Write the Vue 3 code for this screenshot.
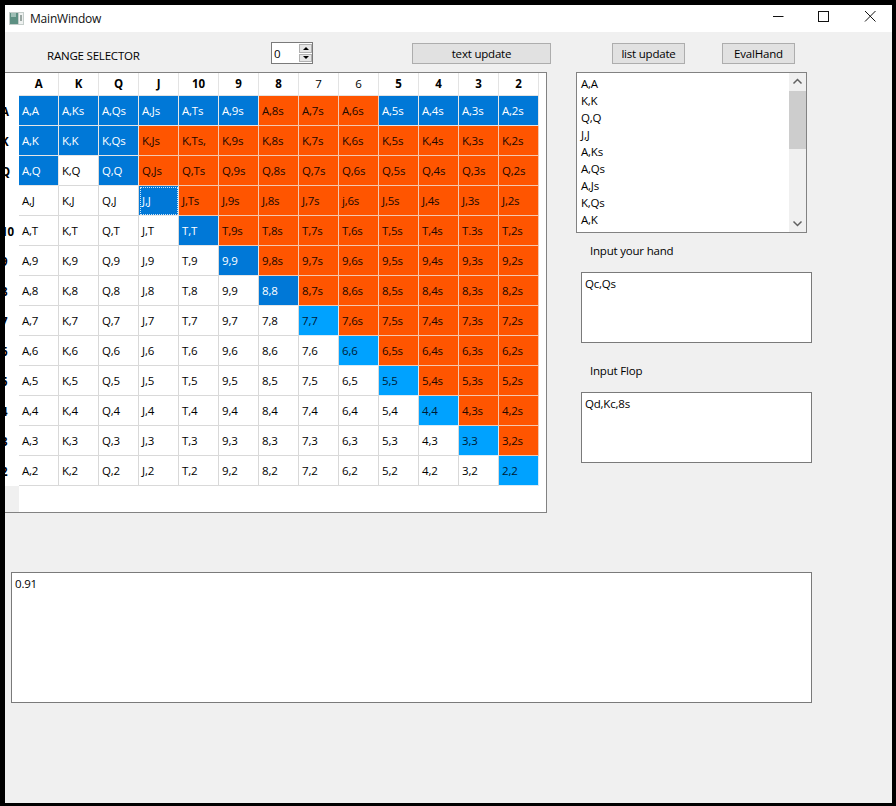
<script setup>
import { ref } from 'vue'

const ranks = ['A', 'K', 'Q', 'J', 'T', '9', '8', '7', '6', '5', '4', '3', '2']
const headers = ['A', 'K', 'Q', 'J', '10', '9', '8', '7', '6', '5', '4', '3', '2']
const thinHeaders = ['7', '6']

// typos that are in the real table
const overrides = { 'K,Ts': 'K,Ts,', 'J,6s': 'j,6s', 'T,3s': 'T.3s', '9,8': '9,9', '8,7': '7,8' }

const isBlue = (r, c) => {
  if (r === 0) return c <= 5 || c >= 9
  if (r === 1) return c <= 2
  if (r === 2) return c === 0 || c === 2
  return r === c && r <= 6
}

const cellClass = (r, c) => {
  if (isBlue(r, c)) return r === 3 && c === 3 ? 'cell--blue cell--focus' : 'cell--blue'
  if (r === c) return 'cell--light'
  if (c > r) return 'cell--orange'
  return ''
}

const cellText = (r, c) => {
  let text
  if (r === c) text = `${ranks[r]},${ranks[c]}`
  else if (c > r) text = `${ranks[r]},${ranks[c]}s`
  else text = `${ranks[c]},${ranks[r]}`
  return overrides[text] || text
}

const listItems = ['A,A', 'K,K', 'Q,Q', 'J,J', 'A,Ks', 'A,Qs', 'A,Js', 'K,Qs', 'A,K']

const spin = ref('0')
const hand = ref('Qc,Qs')
const flop = ref('Qd,Kc,8s')
const output = ref('0.91')
</script>

<template>
  <div class="window">
    <div class="titlebar">
      <svg class="app-icon" width="15" height="13" viewBox="0 0 15 13">
        <rect width="15" height="13" fill="#c4cdca" />
        <rect x="1" y="1" width="8" height="11" fill="#5d8f82" />
        <rect x="2" y="1" width="5" height="4" fill="#9fbfb6" />
        <rect x="10" y="1" width="4" height="11" fill="#eef1f0" />
        <rect x="11" y="3" width="2" height="6" fill="#9aa6a2" />
      </svg>
      <span class="title">MainWindow</span>
      <div class="controls">
        <svg width="46" height="27" viewBox="0 0 46 27"><path d="M18 11.5h10.500" stroke="#111" fill="none" /></svg>
        <svg width="46" height="27" viewBox="0 0 46 27"><rect x="17.500" y="6.500" width="10" height="10" stroke="#111" fill="none" /></svg>
        <svg width="46" height="27" viewBox="0 0 46 27"><path d="M18 6l10.500 10.500M28.500 6L18 16.500" stroke="#111" fill="none" /></svg>
      </div>
    </div>

    <div class="client">
      <div class="toolbar">
        <span class="range-label">RANGE SELECTOR</span>
        <div class="spinbox">
          <input v-model="spin" class="spinbox__input" />
          <div class="spinbox__buttons">
            <span class="spinbox__btn"><i class="arrow arrow--up"></i></span>
            <span class="spinbox__btn"><i class="arrow arrow--down"></i></span>
          </div>
        </div>
        <button class="btn btn--text">text update</button>
        <button class="btn btn--list">list update</button>
        <button class="btn btn--eval">EvalHand</button>
      </div>

      <div class="main">
        <div class="table">
          <div class="corner"></div>
          <div
            v-for="h in headers"
            :key="h"
            class="col-header"
            :class="{ 'col-header--thin': thinHeaders.includes(h) }"
          >{{ h }}</div>
          <template v-for="(h, r) in headers" :key="h">
            <div class="row-header">{{ h }}</div>
            <div
              v-for="(_, c) in ranks"
              :key="c"
              class="cell"
              :class="cellClass(r, c)"
            >{{ cellText(r, c) }}</div>
          </template>
          <div class="table__gutter"></div>
        </div>

        <div class="side">
          <div class="list">
            <div class="list__items">
              <div v-for="item in listItems" :key="item" class="list__item">{{ item }}</div>
            </div>
            <div class="scrollbar">
              <svg width="17" height="17" viewBox="0 0 17 17"><path d="M4.500 10.500l4-4 4 4" stroke="#606060" stroke-width="1.500" fill="none" /></svg>
              <div class="scrollbar__track"><div class="scrollbar__thumb"></div></div>
              <svg width="17" height="17" viewBox="0 0 17 17"><path d="M4.500 6.500l4 4 4-4" stroke="#606060" stroke-width="1.500" fill="none" /></svg>
            </div>
          </div>
          <div class="side__label">Input your hand</div>
          <textarea v-model="hand" class="edit edit--side"></textarea>
          <div class="side__label">Input Flop</div>
          <textarea v-model="flop" class="edit edit--side"></textarea>
        </div>
      </div>

      <textarea v-model="output" class="edit edit--output"></textarea>
    </div>
  </div>
</template>

<style>
html,
body {
  margin: 0;
  background: #000;
}
</style>

<style scoped>
.window {
  width: 887px;
  height: 798px;
  margin: 5px 0 0 5px;
  background: #f0f0f0;
  overflow: hidden;
  font-family: "Open Sans", "Liberation Sans", sans-serif;
  font-size: 11.500px;
  color: #000;
  letter-spacing: -0.200px;
}

.titlebar {
  height: 27px;
  background: #fff;
  display: flex;
  align-items: center;
  padding-left: 4px;
}

.app-icon {
  margin-right: 6px;
}

.title {
  font-size: 12px;
  color: #111;
}

.controls {
  margin-left: auto;
  display: flex;
  margin-right: -1px;
  height: 27px;
}

.controls svg {
  margin-left: 0;
}

.toolbar {
  display: flex;
  align-items: center;
  height: 22px;
  margin-top: 10px;
  padding-left: 42px;
}

.range-label {
  width: 224px;
  padding-top: 5px;
  white-space: nowrap;
}

.spinbox {
  width: 42px;
  height: 22px;
  box-sizing: border-box;
  border: 1px solid #7a7a7a;
  background: #fff;
  display: flex;
}

.spinbox__input {
  width: 25px;
  border: none;
  outline: none;
  padding: 0 0 0 2px;
  font: inherit;
  background: transparent;
}

.spinbox__buttons {
  width: 15px;
  display: flex;
  flex-direction: column;
  gap: 1px;
  padding: 1px 0;
}

.spinbox__btn {
  flex: 1;
  background: #e6e6e6;
  border: 1px solid #b0b0b0;
  display: flex;
  align-items: center;
  justify-content: center;
}

.arrow {
  width: 0;
  height: 0;
  border-left: 3px solid transparent;
  border-right: 3px solid transparent;
}

.arrow--up {
  border-bottom: 3px solid #000;
}

.arrow--down {
  border-top: 3px solid #000;
}

.btn {
  height: 21px;
  box-sizing: border-box;
  background: #e1e1e1;
  border: 1px solid #adadad;
  font: inherit;
  letter-spacing: inherit;
  color: #000;
  padding: 0;
}

.btn--text {
  width: 139px;
  margin-left: 99px;
}

.btn--list {
  width: 73px;
  margin-left: 61px;
}

.btn--eval {
  width: 73px;
  margin-left: 37px;
}

.main {
  display: flex;
  margin-top: 8px;
}

.table {
  width: 542px;
  height: 441px;
  box-sizing: border-box;
  border: 1px solid #828282;
  border-left: none;
  background: #fff;
  display: grid;
  grid-template-columns: 14px repeat(13, 40px);
  grid-template-rows: 23px repeat(13, 30px) 1fr;
}

.corner {
  background: #fff;
}

.col-header {
  display: flex;
  align-items: center;
  justify-content: center;
  font-weight: 700;
  border-right: 1px solid #e3e3e3;
  border-bottom: 1px solid #e3e3e3;
  padding-bottom: 2px;
  box-sizing: border-box;
}

.col-header--thin {
  font-weight: 400;
}

.row-header {
  background: #fff;
  font-weight: 700;
  display: flex;
  align-items: center;
  margin-left: -4px;
  white-space: nowrap;
}

.cell {
  box-sizing: border-box;
  border-right: 1px solid #d9d9d9;
  border-bottom: 1px solid #d9d9d9;
  padding: 0 0 0 3px;
  display: flex;
  align-items: center;
  white-space: nowrap;
  background: #fff;
}

.cell--blue {
  background: #0078d7;
  color: #fff;
  border-color: #e6e6e6;
}

.cell--orange {
  background: #ff5500;
  color: #200800;
  border-color: #f3c8b0;
}

.cell--light {
  background: #00a2ff;
  color: #001a33;
  border-color: #d9eaf5;
}

.cell--focus {
  outline: 1px dotted #cfe4f7;
  outline-offset: -2px;
}

.table__gutter {
  background: #f0f0f0;
  grid-column: 1;
}

.side {
  margin-left: 29px;
  width: 240px;
  display: flex;
  flex-direction: column;
  align-items: flex-start;
}

.list {
  width: 231px;
  height: 161px;
  box-sizing: border-box;
  border: 1px solid #828282;
  background: #fff;
  display: flex;
  justify-content: space-between;
}

.list__items {
  padding: 2px 0 0 4px;
}

.list__item {
  height: 17px;
  line-height: 17px;
}

.scrollbar {
  width: 17px;
  margin-right: 0;
  background: #f0f0f0;
  display: flex;
  flex-direction: column;
}

.scrollbar__track {
  flex: 1;
}

.scrollbar__thumb {
  height: 58px;
  margin-top: 1px;
  background: #cdcdcd;
}

.side__label {
  margin: 10px 0 0 14px;
  height: 16px;
  line-height: 16px;
}

.side__label ~ .side__label {
  margin-top: 20px;
}

.edit {
  display: block;
  box-sizing: border-box;
  border: 1px solid #7a7a7a;
  background: #fff;
  font: inherit;
  letter-spacing: inherit;
  color: #000;
  outline: none;
  resize: none;
  padding: 3px;
  overflow: hidden;
}

.edit--side {
  width: 231px;
  height: 71px;
  margin: 13px 0 0 5px;
}

.edit--output {
  width: 801px;
  height: 131px;
  margin: 59px 0 0 6px;
}
</style>
